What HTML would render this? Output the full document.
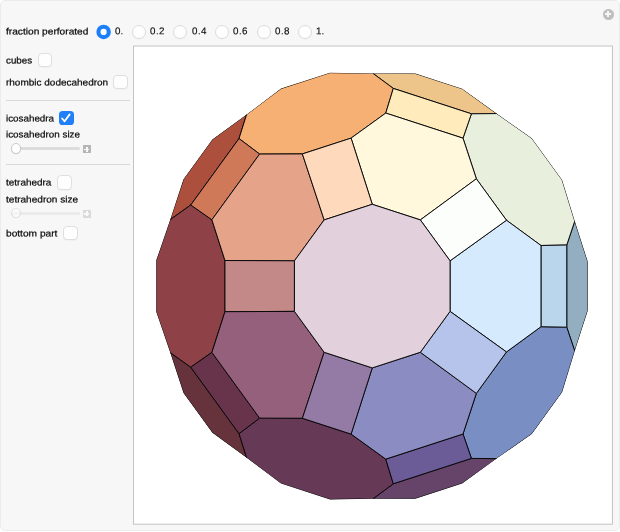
<!DOCTYPE html>
<html><head><meta charset="utf-8">
<style>
html,body{margin:0;padding:0;background:#fff;}
body{width:620px;height:532px;position:relative;overflow:hidden;font-family:"Liberation Sans",sans-serif;font-size:9.3px;color:#0a0a0a;}
#panel{position:absolute;left:0;top:0;width:617.5px;height:528.5px;background:#f7f7f7;border:1px solid #ececec;border-radius:5px;}
#plot{position:absolute;left:133px;top:45.6px;width:478px;height:477.2px;background:#fff;border:1px solid #c4c4c4;}
.t{position:absolute;white-space:nowrap;line-height:12px;height:12px;transform:translateY(0.45px) scaleX(1.075) rotate(0.03deg);transform-origin:0 0;-webkit-text-stroke:0.22px #0a0a0a;}
.n{letter-spacing:0.45px;font-size:9.8px;transform:translateY(0.3px) rotate(0.03deg);-webkit-text-stroke:0.15px #0a0a0a;}
.cb{position:absolute;width:14.4px;height:14.4px;background:#fefefe;border:1px solid #dfdfdf;border-radius:4px;box-sizing:border-box;box-shadow:0 0.4px 0.6px rgba(0,0,0,0.06);}
.cbon{position:absolute;width:14.2px;height:14.2px;background:#2180f8;border-radius:3.6px;}
.rb{position:absolute;width:14.2px;height:14.2px;background:#fefefe;border:1px solid #dcdcdc;border-radius:50%;box-sizing:border-box;box-shadow:0 0.4px 0.6px rgba(0,0,0,0.06);}
.rbon{position:absolute;width:14.4px;height:14.4px;background:#1b7ffa;border-radius:50%;}
.rbon i{position:absolute;left:4.4px;top:4.4px;width:5.6px;height:5.6px;border-radius:50%;background:#fff;}
.sep{position:absolute;left:6px;width:123.5px;height:1px;background:#d9d9d9;}
.trk{position:absolute;left:10.5px;width:69px;height:3px;border-radius:1.5px;background:#dcdcdc;}
.th{position:absolute;width:10.2px;height:10.2px;border-radius:50%;background:#fff;border:0.7px solid #cacaca;box-sizing:border-box;box-shadow:0 0.5px 0.8px rgba(0,0,0,0.12);}
.pl{position:absolute;left:83.1px;width:7.6px;height:7.6px;background:#b6b6b6;}
.pl:before{content:"";position:absolute;left:1.2px;top:3.15px;width:5.2px;height:1.3px;background:#fafafa;}
.pl:after{content:"";position:absolute;left:3.15px;top:1.2px;width:1.3px;height:5.2px;background:#fafafa;}
.dis{opacity:0.45;}
</style></head><body>
<div id="panel"></div>
<svg width="620" height="532" viewBox="0 0 620 532" style="position:absolute;left:0;top:0" stroke="#050505" stroke-width="0.95" stroke-linejoin="round">
<rect x="133.5" y="46.05" width="478.95" height="478.15" fill="#fff" stroke="#c4c4c4" stroke-width="1" stroke-linejoin="miter"/>
<defs><clipPath id="sil"><polygon points="156.23,311.86 156.23,260.34 170.19,219.67 183.47,179.29 212.33,139.56 246.63,114.46 281.00,88.61 329.99,72.69 372.99,73.40 415.49,73.55 462.20,88.73 496.67,113.59 531.87,138.29 562.15,179.97 574.77,221.08 587.76,261.55 587.76,310.65 574.77,351.12 562.15,392.23 531.87,433.91 496.67,458.61 462.20,483.47 415.49,498.65 372.99,498.80 329.99,499.51 281.00,483.59 246.63,457.74 212.33,432.64 183.47,392.91 170.19,352.53"/></clipPath></defs><g clip-path="url(#sil)">
<polygon fill="#ac503d" points="190.75,204.99 239.02,138.55 246.63,114.46 212.33,139.56 183.47,179.29 170.19,219.67"/>
<polygon fill="#edc58a" points="393.31,88.42 471.41,113.80 496.67,113.59 462.20,88.73 415.49,73.55 372.99,73.40"/>
<polygon fill="#93adc1" points="566.76,245.04 566.76,327.16 574.77,351.12 587.76,310.65 587.76,261.55 574.77,221.08"/>
<polygon fill="#664368" points="471.41,458.40 393.31,483.78 372.99,498.80 415.49,498.65 462.20,483.47 496.67,458.61"/>
<polygon fill="#66333c" points="239.02,433.65 190.75,367.21 170.19,352.53 183.47,392.91 212.33,432.64 246.63,457.74"/>
<polygon fill="#8e4248" points="224.96,311.70 224.96,260.50 211.88,219.77 190.75,204.99 170.19,219.67 156.23,260.34 156.23,311.86 170.19,352.53 190.75,367.21 211.88,352.43"/>
<polygon fill="#f7b073" points="302.39,153.93 351.08,138.11 385.78,113.08 393.31,88.42 372.99,73.40 329.99,72.69 281.00,88.61 246.63,114.46 239.02,138.55 259.61,154.07"/>
<polygon fill="#e8efdc" points="476.36,178.81 506.46,220.24 540.98,245.50 566.76,245.04 574.77,221.08 562.15,179.97 531.87,138.29 496.67,113.59 471.41,113.80 463.01,138.17"/>
<polygon fill="#798fc4" points="506.46,351.96 476.36,393.39 463.01,434.03 471.41,458.40 496.67,458.61 531.87,433.91 562.15,392.23 574.77,351.12 566.76,327.16 540.98,326.70"/>
<polygon fill="#663957" points="351.08,434.09 302.39,418.27 259.61,418.13 239.02,433.65 246.63,457.74 281.00,483.59 329.99,499.51 372.99,498.80 393.31,483.78 385.78,459.12"/>
<polygon fill="#d07958" points="211.88,219.77 259.61,154.07 239.02,138.55 190.75,204.99"/>
<polygon fill="#e5a48a" points="294.45,260.82 324.17,219.92 302.39,153.93 259.61,154.07 211.88,219.77 224.96,260.50"/>
<polygon fill="#c38888" points="294.45,311.38 294.45,260.82 224.96,260.50 224.96,311.70"/>
<polygon fill="#ffebbc" points="385.78,113.08 463.01,138.17 471.41,113.80 393.31,88.42"/>
<polygon fill="#fff8dc" points="372.25,204.30 420.33,219.92 476.36,178.81 463.01,138.17 385.78,113.08 351.08,138.11"/>
<polygon fill="#ffd9bc" points="324.17,219.92 372.25,204.30 351.08,138.11 302.39,153.93"/>
<polygon fill="#bad6ec" points="540.98,245.50 540.98,326.70 566.76,327.16 566.76,245.04"/>
<polygon fill="#d6eafe" points="450.05,260.82 450.05,311.38 506.46,351.96 540.98,326.70 540.98,245.50 506.46,220.24"/>
<polygon fill="#fbfefa" points="420.33,219.92 450.05,260.82 506.46,220.24 476.36,178.81"/>
<polygon fill="#6b5c98" points="463.01,434.03 385.78,459.12 393.31,483.78 471.41,458.40"/>
<polygon fill="#8b8cc2" points="420.33,352.28 372.25,367.90 351.08,434.09 385.78,459.12 463.01,434.03 476.36,393.39"/>
<polygon fill="#b6c4ec" points="450.05,311.38 420.33,352.28 476.36,393.39 506.46,351.96"/>
<polygon fill="#68344b" points="259.61,418.13 211.88,352.43 190.75,367.21 239.02,433.65"/>
<polygon fill="#95607b" points="324.17,352.28 294.45,311.38 224.96,311.70 211.88,352.43 259.61,418.13 302.39,418.27"/>
<polygon fill="#937ba6" points="372.25,367.90 324.17,352.28 302.39,418.27 351.08,434.09"/>
<polygon fill="#e2d1dc" points="294.45,311.38 294.45,260.82 324.17,219.92 372.25,204.30 420.33,219.92 450.05,260.82 450.05,311.38 420.33,352.28 372.25,367.90 324.17,352.28"/>
</g></svg>
<div id="ui" style="position:absolute;left:0;top:0;width:620px;height:532px;will-change:transform;">
<div class="t" id="t1" style="left:6.05px;top:25.28px;transform:translateY(0.45px) scaleX(1.0922) rotate(0.03deg);">fraction perforated</div>
<svg style="position:absolute;left:95px;top:23px" width="18" height="18" viewBox="0 0 18 18"><circle cx="8.6" cy="8.9" r="7.25" fill="#1b7ffa"/><circle cx="8.6" cy="8.9" r="3.1" fill="#fff"/></svg>
<div class="t n" id="r0" style="letter-spacing:0;left:114.50px;top:25.28px;">0.</div>
<div class="rb" style="left:131.75px;top:24.75px;"></div>
<div class="t n" id="r1" style="left:150.20px;top:25.28px;">0.2</div>
<div class="rb" style="left:173.00px;top:24.75px;"></div>
<div class="t n" id="r2" style="left:191.70px;top:25.28px;">0.4</div>
<div class="rb" style="left:214.80px;top:24.75px;"></div>
<div class="t n" id="r3" style="left:233.40px;top:25.28px;">0.6</div>
<div class="rb" style="left:256.65px;top:24.75px;"></div>
<div class="t n" id="r4" style="left:274.70px;top:25.28px;">0.8</div>
<div class="rb" style="left:298.20px;top:24.75px;"></div>
<div class="t n" id="r5" style="letter-spacing:0;left:315.90px;top:25.28px;">1.</div>

<div class="t" id="t2" style="left:5.75px;top:54.48px;transform:translateY(0.45px) scaleX(1.0546) rotate(0.03deg);">cubes</div>
<div class="cb" style="left:37.80px;top:53.00px;"></div>
<div class="t" id="t3" style="left:5.6px;top:76.38px;transform:translateY(0.45px) scaleX(1.0739) rotate(0.03deg);">rhombic dodecahedron</div>
<div class="cb" style="left:113.20px;top:75.05px;"></div>
<div class="sep" style="top:99.5px;"></div>
<div class="t" id="t4" style="left:5.6px;top:112.28px;transform:translateY(0.45px) scaleX(1.0567) rotate(0.03deg);">icosahedra</div>
<div class="cbon" style="left:59.4px;top:110.95px;"><svg width="14" height="14" viewBox="0 0 14 14" style="position:absolute;left:0;top:0"><path d="M3.1 7.5 L5.6 10.3 L10.7 3.4" fill="none" stroke="#fff" stroke-width="1.8" stroke-linecap="round" stroke-linejoin="round"/></svg></div>
<div class="t" id="t5" style="left:5.6px;top:128.08px;transform:translateY(0.45px) scaleX(1.0610) rotate(0.03deg);">icosahedron size</div>
<div class="trk" style="top:147.05px;"></div>
<div class="th" style="left:10.6px;top:143.35px;"></div>
<div class="pl" style="top:145.4px;"></div>
<div class="sep" style="top:164px;"></div>
<div class="t" id="t6" style="left:6.20px;top:176.18px;transform:translateY(0.45px) scaleX(1.0707) rotate(0.03deg);">tetrahedra</div>
<div class="cb" style="left:57.25px;top:175.25px;"></div>
<div class="t" id="t7" style="left:6.40px;top:192.88px;transform:translateY(0.45px) scaleX(1.0815) rotate(0.03deg);">tetrahedron size</div>
<div class="trk dis" style="top:211.9px;"></div>
<div class="th dis" style="left:10.6px;top:208.2px;"></div>
<div class="pl dis" style="top:210.1px;"></div>
<div class="t" id="t8" style="left:5.85px;top:226.78px;transform:translateY(0.45px) scaleX(1.0933) rotate(0.03deg);">bottom part</div>
<div class="cb" style="left:63.35px;top:225.80px;"></div>
</div>
<div style="position:absolute;left:602.95px;top:9.0px;width:10.6px;height:10.6px;border-radius:50%;background:#bfbfbf;"><div style="position:absolute;left:2.2px;top:4.4px;width:6.2px;height:1.8px;background:#f7f7f7"></div><div style="position:absolute;left:4.4px;top:2.2px;width:1.8px;height:6.2px;background:#f7f7f7"></div></div>
</body></html>
